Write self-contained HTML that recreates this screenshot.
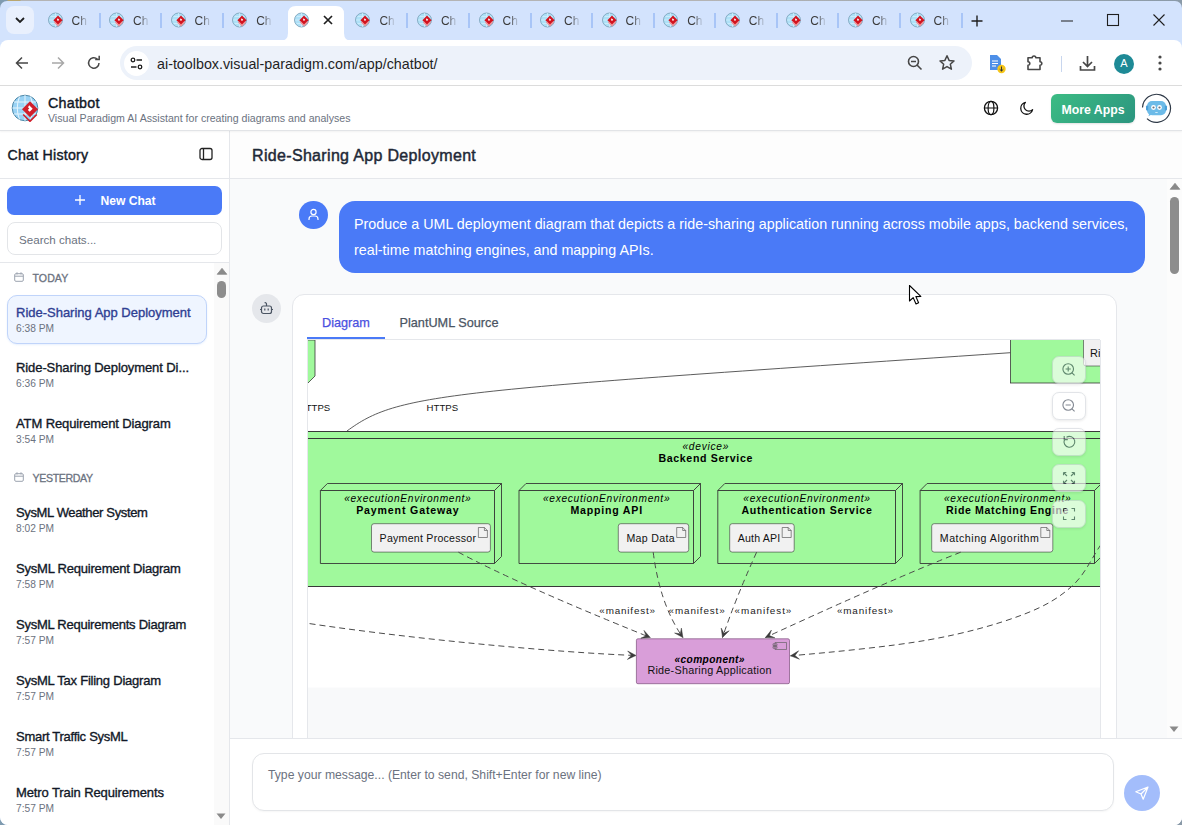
<!DOCTYPE html>
<html><head><meta charset="utf-8">
<style>
*{box-sizing:border-box;margin:0;padding:0}
html,body{width:1182px;height:825px;overflow:hidden;font-family:"Liberation Sans",sans-serif}
body{position:relative;background:linear-gradient(90deg,#7f9bb0 0,#7f9bb0 7px,#b9a66e 8px,#b9a66e 20px,#b4b4b4 21px,#b4b4b4 60%,#8a9aa8 100%)}
.a{position:absolute}
#win{position:absolute;left:0;top:0;width:1182px;height:825px;clip-path:inset(1px 0 0 0 round 7px 7px 8px 8px);overflow:hidden;background:#d3e3fd}
.tab{position:absolute;top:0;height:40px;width:62px}
.fav{position:absolute;top:11.5px;width:16px;height:16px}
.tt{position:absolute;top:12.5px;font-size:12px;color:#3b3b3b;line-height:16px;white-space:nowrap;overflow:hidden;width:17px;-webkit-mask-image:linear-gradient(90deg,#000 0,#000 40%,rgba(0,0,0,0.35) 75%,rgba(0,0,0,0) 100%);mask-image:linear-gradient(90deg,#000 0,#000 40%,rgba(0,0,0,0.35) 75%,rgba(0,0,0,0) 100%)}
.sep{position:absolute;top:12.5px;width:2px;height:15.5px;background:#a8c5f7}
.txt{position:absolute;white-space:nowrap;line-height:1}
.zb{position:absolute;left:0;width:34px;height:28px;border-radius:7px;background:#fff;border:1px solid #d1d5db;box-shadow:0 1px 3px rgba(0,0,0,0.15)}
.zb svg{position:absolute;left:-1px;top:-1px}
</style></head><body>
<div id="win">
  <!-- TAB STRIP -->
  <div class="a" style="left:6px;top:6px;width:28px;height:28px;border-radius:8px;background:#e9f0fd"></div>
  <svg class="a" style="left:13px;top:13px" width="14" height="14" viewBox="0 0 14 14"><path d="M3 5 L7 9 L11 5" fill="none" stroke="#1f1f1f" stroke-width="1.8"/></svg>
  <!-- active tab -->
  <div class="a" style="left:280px;top:6px;width:72px;height:35px">
    <svg width="72" height="35" viewBox="0 0 72 35" style="position:absolute;left:0;top:0"><path d="M0 35 Q8 35 8 27 L8 8 Q8 0 16 0 L56 0 Q64 0 64 8 L64 27 Q64 35 72 35 Z" fill="#fff"/></svg>
  </div>
  <div id="tabs"><div class="fav" style="left:47.5px"><svg viewBox="0 0 16 16" width="16" height="16"><circle cx="7.5" cy="8" r="7" fill="#aee0f7" stroke="#7fa6bd" stroke-width="0.9"></circle><path d="M1 8 H14 M7.5 1 V15 M2.5 4.5 H12.5 M2.5 11.5 H12.5" stroke="#d6f0fc" stroke-width="0.7"></path><path d="M10 3.6 L14.6 8.2 L10 12.8 L5.4 8.2 Z" fill="#d3131f"></path><path d="M6 10.5 L10 14.6 L14 10.5 L13 9.6 L10 12.6 L7 9.6 Z" fill="#ef8a8f"></path><path d="M9.6 6.2 L11.2 7.8 L10 9 L9 8 Z" fill="#fff"></path></svg></div><div class="tt" style="left:71.5px">Ch</div><div class="sep" style="left:98.5px"></div><div class="fav" style="left:109.1px"><svg viewBox="0 0 16 16" width="16" height="16"><circle cx="7.5" cy="8" r="7" fill="#aee0f7" stroke="#7fa6bd" stroke-width="0.9"></circle><path d="M1 8 H14 M7.5 1 V15 M2.5 4.5 H12.5 M2.5 11.5 H12.5" stroke="#d6f0fc" stroke-width="0.7"></path><path d="M10 3.6 L14.6 8.2 L10 12.8 L5.4 8.2 Z" fill="#d3131f"></path><path d="M6 10.5 L10 14.6 L14 10.5 L13 9.6 L10 12.6 L7 9.6 Z" fill="#ef8a8f"></path><path d="M9.6 6.2 L11.2 7.8 L10 9 L9 8 Z" fill="#fff"></path></svg></div><div class="tt" style="left:133.1px">Ch</div><div class="sep" style="left:160.1px"></div><div class="fav" style="left:170.6px"><svg viewBox="0 0 16 16" width="16" height="16"><circle cx="7.5" cy="8" r="7" fill="#aee0f7" stroke="#7fa6bd" stroke-width="0.9"></circle><path d="M1 8 H14 M7.5 1 V15 M2.5 4.5 H12.5 M2.5 11.5 H12.5" stroke="#d6f0fc" stroke-width="0.7"></path><path d="M10 3.6 L14.6 8.2 L10 12.8 L5.4 8.2 Z" fill="#d3131f"></path><path d="M6 10.5 L10 14.6 L14 10.5 L13 9.6 L10 12.6 L7 9.6 Z" fill="#ef8a8f"></path><path d="M9.6 6.2 L11.2 7.8 L10 9 L9 8 Z" fill="#fff"></path></svg></div><div class="tt" style="left:194.6px">Ch</div><div class="sep" style="left:221.6px"></div><div class="fav" style="left:232.2px"><svg viewBox="0 0 16 16" width="16" height="16"><circle cx="7.5" cy="8" r="7" fill="#aee0f7" stroke="#7fa6bd" stroke-width="0.9"></circle><path d="M1 8 H14 M7.5 1 V15 M2.5 4.5 H12.5 M2.5 11.5 H12.5" stroke="#d6f0fc" stroke-width="0.7"></path><path d="M10 3.6 L14.6 8.2 L10 12.8 L5.4 8.2 Z" fill="#d3131f"></path><path d="M6 10.5 L10 14.6 L14 10.5 L13 9.6 L10 12.6 L7 9.6 Z" fill="#ef8a8f"></path><path d="M9.6 6.2 L11.2 7.8 L10 9 L9 8 Z" fill="#fff"></path></svg></div><div class="tt" style="left:256.2px">Ch</div><div class="fav" style="left:293.8px"><svg viewBox="0 0 16 16" width="16" height="16"><circle cx="7.5" cy="8" r="7" fill="#aee0f7" stroke="#7fa6bd" stroke-width="0.9"></circle><path d="M1 8 H14 M7.5 1 V15 M2.5 4.5 H12.5 M2.5 11.5 H12.5" stroke="#d6f0fc" stroke-width="0.7"></path><path d="M10 3.6 L14.6 8.2 L10 12.8 L5.4 8.2 Z" fill="#d3131f"></path><path d="M6 10.5 L10 14.6 L14 10.5 L13 9.6 L10 12.6 L7 9.6 Z" fill="#ef8a8f"></path><path d="M9.6 6.2 L11.2 7.8 L10 9 L9 8 Z" fill="#fff"></path></svg></div><div class="fav" style="left:355.4px"><svg viewBox="0 0 16 16" width="16" height="16"><circle cx="7.5" cy="8" r="7" fill="#aee0f7" stroke="#7fa6bd" stroke-width="0.9"></circle><path d="M1 8 H14 M7.5 1 V15 M2.5 4.5 H12.5 M2.5 11.5 H12.5" stroke="#d6f0fc" stroke-width="0.7"></path><path d="M10 3.6 L14.6 8.2 L10 12.8 L5.4 8.2 Z" fill="#d3131f"></path><path d="M6 10.5 L10 14.6 L14 10.5 L13 9.6 L10 12.6 L7 9.6 Z" fill="#ef8a8f"></path><path d="M9.6 6.2 L11.2 7.8 L10 9 L9 8 Z" fill="#fff"></path></svg></div><div class="tt" style="left:379.4px">Ch</div><div class="sep" style="left:406.4px"></div><div class="fav" style="left:416.9px"><svg viewBox="0 0 16 16" width="16" height="16"><circle cx="7.5" cy="8" r="7" fill="#aee0f7" stroke="#7fa6bd" stroke-width="0.9"></circle><path d="M1 8 H14 M7.5 1 V15 M2.5 4.5 H12.5 M2.5 11.5 H12.5" stroke="#d6f0fc" stroke-width="0.7"></path><path d="M10 3.6 L14.6 8.2 L10 12.8 L5.4 8.2 Z" fill="#d3131f"></path><path d="M6 10.5 L10 14.6 L14 10.5 L13 9.6 L10 12.6 L7 9.6 Z" fill="#ef8a8f"></path><path d="M9.6 6.2 L11.2 7.8 L10 9 L9 8 Z" fill="#fff"></path></svg></div><div class="tt" style="left:440.9px">Ch</div><div class="sep" style="left:467.9px"></div><div class="fav" style="left:478.5px"><svg viewBox="0 0 16 16" width="16" height="16"><circle cx="7.5" cy="8" r="7" fill="#aee0f7" stroke="#7fa6bd" stroke-width="0.9"></circle><path d="M1 8 H14 M7.5 1 V15 M2.5 4.5 H12.5 M2.5 11.5 H12.5" stroke="#d6f0fc" stroke-width="0.7"></path><path d="M10 3.6 L14.6 8.2 L10 12.8 L5.4 8.2 Z" fill="#d3131f"></path><path d="M6 10.5 L10 14.6 L14 10.5 L13 9.6 L10 12.6 L7 9.6 Z" fill="#ef8a8f"></path><path d="M9.6 6.2 L11.2 7.8 L10 9 L9 8 Z" fill="#fff"></path></svg></div><div class="tt" style="left:502.5px">Ch</div><div class="sep" style="left:529.5px"></div><div class="fav" style="left:540.1px"><svg viewBox="0 0 16 16" width="16" height="16"><circle cx="7.5" cy="8" r="7" fill="#aee0f7" stroke="#7fa6bd" stroke-width="0.9"></circle><path d="M1 8 H14 M7.5 1 V15 M2.5 4.5 H12.5 M2.5 11.5 H12.5" stroke="#d6f0fc" stroke-width="0.7"></path><path d="M10 3.6 L14.6 8.2 L10 12.8 L5.4 8.2 Z" fill="#d3131f"></path><path d="M6 10.5 L10 14.6 L14 10.5 L13 9.6 L10 12.6 L7 9.6 Z" fill="#ef8a8f"></path><path d="M9.6 6.2 L11.2 7.8 L10 9 L9 8 Z" fill="#fff"></path></svg></div><div class="tt" style="left:564.1px">Ch</div><div class="sep" style="left:591.1px"></div><div class="fav" style="left:601.6px"><svg viewBox="0 0 16 16" width="16" height="16"><circle cx="7.5" cy="8" r="7" fill="#aee0f7" stroke="#7fa6bd" stroke-width="0.9"></circle><path d="M1 8 H14 M7.5 1 V15 M2.5 4.5 H12.5 M2.5 11.5 H12.5" stroke="#d6f0fc" stroke-width="0.7"></path><path d="M10 3.6 L14.6 8.2 L10 12.8 L5.4 8.2 Z" fill="#d3131f"></path><path d="M6 10.5 L10 14.6 L14 10.5 L13 9.6 L10 12.6 L7 9.6 Z" fill="#ef8a8f"></path><path d="M9.6 6.2 L11.2 7.8 L10 9 L9 8 Z" fill="#fff"></path></svg></div><div class="tt" style="left:625.6px">Ch</div><div class="sep" style="left:652.6px"></div><div class="fav" style="left:663.2px"><svg viewBox="0 0 16 16" width="16" height="16"><circle cx="7.5" cy="8" r="7" fill="#aee0f7" stroke="#7fa6bd" stroke-width="0.9"></circle><path d="M1 8 H14 M7.5 1 V15 M2.5 4.5 H12.5 M2.5 11.5 H12.5" stroke="#d6f0fc" stroke-width="0.7"></path><path d="M10 3.6 L14.6 8.2 L10 12.8 L5.4 8.2 Z" fill="#d3131f"></path><path d="M6 10.5 L10 14.6 L14 10.5 L13 9.6 L10 12.6 L7 9.6 Z" fill="#ef8a8f"></path><path d="M9.6 6.2 L11.2 7.8 L10 9 L9 8 Z" fill="#fff"></path></svg></div><div class="tt" style="left:687.2px">Ch</div><div class="sep" style="left:714.2px"></div><div class="fav" style="left:724.8px"><svg viewBox="0 0 16 16" width="16" height="16"><circle cx="7.5" cy="8" r="7" fill="#aee0f7" stroke="#7fa6bd" stroke-width="0.9"></circle><path d="M1 8 H14 M7.5 1 V15 M2.5 4.5 H12.5 M2.5 11.5 H12.5" stroke="#d6f0fc" stroke-width="0.7"></path><path d="M10 3.6 L14.6 8.2 L10 12.8 L5.4 8.2 Z" fill="#d3131f"></path><path d="M6 10.5 L10 14.6 L14 10.5 L13 9.6 L10 12.6 L7 9.6 Z" fill="#ef8a8f"></path><path d="M9.6 6.2 L11.2 7.8 L10 9 L9 8 Z" fill="#fff"></path></svg></div><div class="tt" style="left:748.8px">Ch</div><div class="sep" style="left:775.8px"></div><div class="fav" style="left:786.3px"><svg viewBox="0 0 16 16" width="16" height="16"><circle cx="7.5" cy="8" r="7" fill="#aee0f7" stroke="#7fa6bd" stroke-width="0.9"></circle><path d="M1 8 H14 M7.5 1 V15 M2.5 4.5 H12.5 M2.5 11.5 H12.5" stroke="#d6f0fc" stroke-width="0.7"></path><path d="M10 3.6 L14.6 8.2 L10 12.8 L5.4 8.2 Z" fill="#d3131f"></path><path d="M6 10.5 L10 14.6 L14 10.5 L13 9.6 L10 12.6 L7 9.6 Z" fill="#ef8a8f"></path><path d="M9.6 6.2 L11.2 7.8 L10 9 L9 8 Z" fill="#fff"></path></svg></div><div class="tt" style="left:810.3px">Ch</div><div class="sep" style="left:837.3px"></div><div class="fav" style="left:847.9px"><svg viewBox="0 0 16 16" width="16" height="16"><circle cx="7.5" cy="8" r="7" fill="#aee0f7" stroke="#7fa6bd" stroke-width="0.9"></circle><path d="M1 8 H14 M7.5 1 V15 M2.5 4.5 H12.5 M2.5 11.5 H12.5" stroke="#d6f0fc" stroke-width="0.7"></path><path d="M10 3.6 L14.6 8.2 L10 12.8 L5.4 8.2 Z" fill="#d3131f"></path><path d="M6 10.5 L10 14.6 L14 10.5 L13 9.6 L10 12.6 L7 9.6 Z" fill="#ef8a8f"></path><path d="M9.6 6.2 L11.2 7.8 L10 9 L9 8 Z" fill="#fff"></path></svg></div><div class="tt" style="left:871.9px">Ch</div><div class="sep" style="left:898.9px"></div><div class="fav" style="left:909.5px"><svg viewBox="0 0 16 16" width="16" height="16"><circle cx="7.5" cy="8" r="7" fill="#aee0f7" stroke="#7fa6bd" stroke-width="0.9"></circle><path d="M1 8 H14 M7.5 1 V15 M2.5 4.5 H12.5 M2.5 11.5 H12.5" stroke="#d6f0fc" stroke-width="0.7"></path><path d="M10 3.6 L14.6 8.2 L10 12.8 L5.4 8.2 Z" fill="#d3131f"></path><path d="M6 10.5 L10 14.6 L14 10.5 L13 9.6 L10 12.6 L7 9.6 Z" fill="#ef8a8f"></path><path d="M9.6 6.2 L11.2 7.8 L10 9 L9 8 Z" fill="#fff"></path></svg></div><div class="tt" style="left:933.5px">Ch</div><div class="sep" style="left:960.5px"></div></div>
  <svg class="a" style="left:322px;top:14px" width="12" height="12" viewBox="0 0 12 12"><path d="M2 2 L10 10 M10 2 L2 10" stroke="#1f1f1f" stroke-width="1.7"/></svg>
  <svg class="a" style="left:969px;top:12.5px" width="16" height="16" viewBox="0 0 16 16"><path d="M8 2.5 V13.5 M2.5 8 H13.5" stroke="#1f1f1f" stroke-width="1.4"/></svg>
  <svg class="a" style="left:1060px;top:14px" width="14" height="14" viewBox="0 0 14 14"><path d="M1 7 H13" stroke="#1f1f1f" stroke-width="1.1"/></svg>
  <svg class="a" style="left:1106px;top:13px" width="14" height="14" viewBox="0 0 14 14"><rect x="1.5" y="1.5" width="11" height="11" fill="none" stroke="#1f1f1f" stroke-width="1.1"/></svg>
  <svg class="a" style="left:1152px;top:13px" width="14" height="14" viewBox="0 0 14 14"><path d="M1.5 1.5 L12.5 12.5 M12.5 1.5 L1.5 12.5" stroke="#1f1f1f" stroke-width="1.1"/></svg>

  <!-- TOOLBAR -->
  <div class="a" style="left:0;top:40px;width:1182px;height:46px;background:#fff;border-radius:8px 8px 0 0"></div>
  <div class="a" style="left:0;top:85px;width:1182px;height:1px;background:#dcdcdc"></div>
  <svg class="a" style="left:14px;top:55px" width="16" height="16" viewBox="0 0 16 16"><path d="M14 8 H2.5 M8 2.5 L2.5 8 L8 13.5" fill="none" stroke="#474747" stroke-width="1.5"/></svg>
  <svg class="a" style="left:50px;top:55px" width="16" height="16" viewBox="0 0 16 16"><path d="M2 8 H13.5 M8 2.5 L13.5 8 L8 13.5" fill="none" stroke="#a8a8a8" stroke-width="1.5"/></svg>
  <svg class="a" style="left:86px;top:55px" width="16" height="16" viewBox="0 0 16 16"><path d="M13 8 A5.2 5.2 0 1 1 11.4 4.2" fill="none" stroke="#474747" stroke-width="1.5"/><path d="M9.2 4.6 L13.2 4.6 L13.2 0.8" fill="none" stroke="#474747" stroke-width="1.5"/></svg>
  <div class="a" style="left:120px;top:46px;width:852px;height:34px;border-radius:17px;background:#edf2fa"></div>
  <div class="a" style="left:124px;top:51px;width:25px;height:25px;border-radius:50%;background:#fff"></div>
  <svg class="a" style="left:129px;top:56px" width="15" height="15" viewBox="0 0 15 15"><circle cx="4" cy="4" r="1.8" fill="none" stroke="#1f1f1f" stroke-width="1.3"/><path d="M7.5 4 H13" stroke="#1f1f1f" stroke-width="1.3"/><circle cx="11" cy="11" r="1.8" fill="none" stroke="#1f1f1f" stroke-width="1.3"/><path d="M2 11 H7.5" stroke="#1f1f1f" stroke-width="1.3"/></svg>
  <div class="txt" style="left:157px;top:56.5px;font-size:14.3px;color:#1f1f1f">ai-toolbox.visual-paradigm.com/app/chatbot/</div>
  <svg class="a" style="left:906px;top:54px" width="18" height="18" viewBox="0 0 18 18"><circle cx="7.5" cy="7.5" r="5" fill="none" stroke="#474747" stroke-width="1.6"/><path d="M11 11 L15.5 15.5 M5 7.5 H10" stroke="#474747" stroke-width="1.6"/></svg>
  <svg class="a" style="left:938px;top:54px" width="18" height="18" viewBox="0 0 18 18"><path d="M9 1.8 L11.1 6.4 L16 6.9 L12.3 10.2 L13.4 15.2 L9 12.6 L4.6 15.2 L5.7 10.2 L2 6.9 L6.9 6.4 Z" fill="none" stroke="#474747" stroke-width="1.5" stroke-linejoin="round"/></svg>
  <svg class="a" style="left:987px;top:54px" width="20" height="20" viewBox="0 0 20 20"><path d="M3 1 H10 L14 5 V16 H3 Z" fill="#4d8fe8"/><path d="M5 7 H11 M5 9.5 H11 M5 12 H9" stroke="#fff" stroke-width="1"/><circle cx="14.5" cy="15" r="4.2" fill="#f5c518"/><path d="M14.5 12.5 V17 M12.7 15.3 L14.5 17 L16.3 15.3" fill="none" stroke="#333" stroke-width="1"/></svg>
  <svg class="a" style="left:1025px;top:54px" width="18" height="18" viewBox="0 0 18 18"><path d="M3 3.8 H7.2 A1.8 1.8 0 0 1 10.8 3.8 H15 V7.7 A1.8 1.8 0 0 1 15 11.3 V15.5 H3 V11.3 A1.8 1.8 0 0 0 3 7.7 Z" fill="none" stroke="#474747" stroke-width="1.6" stroke-linejoin="round"/></svg>
  <div class="a" style="left:1061px;top:56px;width:1px;height:16px;background:#c8d6ee"></div>
  <svg class="a" style="left:1078px;top:54px" width="19" height="19" viewBox="0 0 19 19"><path d="M9.5 2 V12 M5 8 L9.5 12.5 L14 8 M2.5 12 V16 H16.5 V12" fill="none" stroke="#474747" stroke-width="1.7"/></svg>
  <div class="a" style="left:1114px;top:54px;width:20px;height:20px;border-radius:50%;background:#1e8a96"></div>
  <div class="txt" style="left:1114px;top:58px;width:20px;text-align:center;font-size:11px;color:#fff">A</div>
  <svg class="a" style="left:1152px;top:53px" width="16" height="20" viewBox="0 0 16 20"><circle cx="8" cy="4" r="1.6" fill="#474747"/><circle cx="8" cy="10" r="1.6" fill="#474747"/><circle cx="8" cy="16" r="1.6" fill="#474747"/></svg>

  <!-- APP -->
  <!-- APP HEADER -->
  <div class="a" style="left:0;top:86px;width:1182px;height:739px;background:#fff"></div>
  
  <svg class="a" style="left:11px;top:94px" width="28" height="28" viewBox="0 0 28 28">
    <circle cx="14" cy="14" r="12.8" fill="#9ad3f5" stroke="#4e87a6" stroke-width="1"/>
    <path d="M1.5 14 H26.5 M14 1.2 V26.8 M3 8 H25 M3 20 H25 M8.5 2.5 Q4 14 8.5 25.5 M19.5 2.5 Q24 14 19.5 25.5" fill="none" stroke="#e6f5fd" stroke-width="1"/>
    <path d="M19 7.3 L27 15.3 L19 23.3 L11 15.3 Z" fill="#d11f2b"/>
    <path d="M18.2 11.3 L21.7 14.8 L18.7 17.8 L16.8 15.9 L18.3 14.6 L17 13.2 Z" fill="#fff"/>
    <path d="M12.2 20.5 L19 27.3 L25.8 20.5" fill="none" stroke="#d11f2b" stroke-width="1.6"/>
  </svg>
  <div class="txt" style="left:48px;top:96px;font-size:14.3px;-webkit-text-stroke:0.4px currentColor;color:#111827;letter-spacing:0.23px">Chatbot</div>
  <div class="txt" style="left:48px;top:113px;font-size:10.6px;color:#6b7280">Visual Paradigm AI Assistant for creating diagrams and analyses</div>
  <svg class="a" style="left:983px;top:100px" width="16" height="16" viewBox="0 0 16 16"><circle cx="8" cy="8" r="6.6" fill="none" stroke="#111" stroke-width="1.3"/><ellipse cx="8" cy="8" rx="2.9" ry="6.6" fill="none" stroke="#111" stroke-width="1.2"/><path d="M1.4 8 H14.6" stroke="#111" stroke-width="1.2"/></svg>
  <svg class="a" style="left:1019px;top:100px" width="16" height="16" viewBox="0 0 16 16"><path d="M13.6 9.6 A6 6 0 1 1 6.4 2.4 A4.6 4.6 0 0 0 13.6 9.6 Z" fill="none" stroke="#111" stroke-width="1.3" stroke-linejoin="round"/></svg>
  <div class="a" style="left:1051px;top:94px;width:84px;height:29px;border-radius:6px;background:linear-gradient(135deg,#3cbc84,#2b957f);box-shadow:0 1px 2px rgba(0,0,0,0.12)"></div>
  <div class="txt" style="left:1051px;top:104px;width:84px;text-align:center;font-size:12.3px;font-weight:bold;color:#fff">More Apps</div>
  <svg class="a" style="left:1141px;top:93px" width="31" height="31" viewBox="0 0 31 31">
    <path d="M1.5 14.5 A14 14 0 1 1 6 25.6" fill="none" stroke="#2f3a48" stroke-width="1.2"/>
    <rect x="6" y="8.1" width="19" height="14.2" rx="5" fill="#6dbbe8"/>
    <path d="M8.5 19 L7.5 23.2 L12.5 20.5 Z" fill="#6dbbe8"/>
    <rect x="5" y="12.5" width="2.2" height="5" rx="1" fill="#4a9fd8"/><rect x="23.8" y="12.5" width="2.2" height="5" rx="1" fill="#4a9fd8"/>
    <circle cx="12.5" cy="14.5" r="2.4" fill="#fff"/><circle cx="18.5" cy="14.5" r="2.4" fill="#fff"/>
    <circle cx="12.5" cy="14.5" r="1.1" fill="#6b7580"/><circle cx="18.5" cy="14.5" r="1.1" fill="#6b7580"/>
    <path d="M14.3 19.5 H16.7" stroke="#d9effb" stroke-width="0.9"/>
  </svg>

  <!-- SIDEBAR -->
  <div class="a" style="left:229px;top:131px;width:1px;height:694px;background:#e5e7eb"></div>
  <div class="txt" style="left:7.5px;top:147.5px;font-size:14.2px;-webkit-text-stroke:0.4px currentColor;color:#111827;letter-spacing:0.23px">Chat History</div>
  <svg class="a" style="left:199px;top:147px" width="14" height="14" viewBox="0 0 14 14"><rect x="1" y="1.5" width="12" height="11" rx="2" fill="none" stroke="#222" stroke-width="1.3"/><path d="M4.5 1.5 V12.5" stroke="#222" stroke-width="1.3"/></svg>
  <div class="a" style="left:0;top:178px;width:229px;height:1px;background:#e5e7eb"></div>
  <div class="a" style="left:7px;top:186px;width:215px;height:29px;border-radius:7px;background:#4a7af7"></div>
  <svg class="a" style="left:74px;top:194px" width="12" height="12" viewBox="0 0 12 12"><path d="M6 1 V11 M1 6 H11" stroke="#fff" stroke-width="1.3"/></svg>
  <div class="txt" style="left:100.5px;top:194.5px;font-size:12.1px;font-weight:bold;color:#fff">New Chat</div>
  <div class="a" style="left:7px;top:222px;width:215px;height:33px;border-radius:8px;background:#fff;border:1px solid #e3e5e8"></div>
  <div class="txt" style="left:19px;top:234px;font-size:11.6px;color:#6b7280">Search chats...</div>
  <div class="a" style="left:0;top:262px;width:229px;height:1px;background:#e5e7eb"></div>
  <!-- sidebar scrollbar -->
  <div class="a" style="left:214px;top:263px;width:15px;height:562px;background:#fafafa"></div>
  <svg class="a" style="left:215.5px;top:266px" width="12" height="10" viewBox="0 0 12 10"><path d="M1.2 8.3 L6 2.3 L10.8 8.3 Z" fill="#8a8a8a" stroke="#8a8a8a" stroke-width="0.8" stroke-linejoin="round"/></svg>
  <div class="a" style="left:217px;top:281px;width:9px;height:17px;border-radius:4.5px;background:#8d8d8d"></div>
  <svg class="a" style="left:215px;top:812px" width="12" height="10" viewBox="0 0 12 10"><path d="M1.5 1.5 L6 7 L10.5 1.5 Z" fill="#8a8a8a"/></svg>
  <svg class="a" style="left:14px;top:272px" width="10" height="10" viewBox="0 0 10 10"><rect x="0.7" y="1.7" width="8.6" height="7.6" rx="1.2" fill="none" stroke="#9ca3af" stroke-width="1"/><path d="M0.7 4.2 H9.3 M3 0.3 V2.5 M7 0.3 V2.5" stroke="#9ca3af" stroke-width="1"/></svg>
  <div class="txt" style="left:32.5px;top:272.5px;font-size:10.6px;-webkit-text-stroke:0.3px currentColor;color:#6b7280;letter-spacing:0.06px">TODAY</div>
  <div class="a" style="left:7px;top:295px;width:200px;height:49px;border-radius:10px;background:#eff5ff;border:1px solid #c0d4fa;box-shadow:0 1px 2px rgba(59,130,246,0.12)"></div>
  <div id="hist"><div class="txt" style="left:16px;top:305.8px;font-size:13px;letter-spacing:-0.011px;-webkit-text-stroke:0.35px currentColor;color:#2f3f93">Ride-Sharing App Deployment</div><div class="txt" style="left:16px;top:323.6px;font-size:10.2px;color:#6b7280">6:38 PM</div><div class="txt" style="left:16px;top:361.4px;font-size:13px;letter-spacing:-0.09px;-webkit-text-stroke:0.35px currentColor;color:#111827">Ride-Sharing Deployment Di...</div><div class="txt" style="left:16px;top:379.2px;font-size:10.2px;color:#6b7280">6:36 PM</div><div class="txt" style="left:16px;top:417.2px;font-size:13px;letter-spacing:-0.113px;-webkit-text-stroke:0.35px currentColor;color:#111827">ATM Requirement Diagram</div><div class="txt" style="left:16px;top:435px;font-size:10.2px;color:#6b7280">3:54 PM</div><div class="txt" style="left:16px;top:506.2px;font-size:13px;letter-spacing:-0.36px;-webkit-text-stroke:0.35px currentColor;color:#111827">SysML Weather System</div><div class="txt" style="left:16px;top:524px;font-size:10.2px;color:#6b7280">8:02 PM</div><div class="txt" style="left:16px;top:561.7px;font-size:13px;letter-spacing:-0.212px;-webkit-text-stroke:0.35px currentColor;color:#111827">SysML Requirement Diagram</div><div class="txt" style="left:16px;top:579.5px;font-size:10.2px;color:#6b7280">7:58 PM</div><div class="txt" style="left:16px;top:617.7px;font-size:13px;letter-spacing:-0.25px;-webkit-text-stroke:0.35px currentColor;color:#111827">SysML Requirements Diagram</div><div class="txt" style="left:16px;top:635.5px;font-size:10.2px;color:#6b7280">7:57 PM</div><div class="txt" style="left:16px;top:673.7px;font-size:13px;letter-spacing:-0.229px;-webkit-text-stroke:0.35px currentColor;color:#111827">SysML Tax Filing Diagram</div><div class="txt" style="left:16px;top:691.5px;font-size:10.2px;color:#6b7280">7:57 PM</div><div class="txt" style="left:16px;top:729.7px;font-size:13px;letter-spacing:-0.279px;-webkit-text-stroke:0.35px currentColor;color:#111827">Smart Traffic SysML</div><div class="txt" style="left:16px;top:747.5px;font-size:10.2px;color:#6b7280">7:57 PM</div><div class="txt" style="left:16px;top:785.7px;font-size:13px;letter-spacing:-0.1px;-webkit-text-stroke:0.35px currentColor;color:#111827">Metro Train Requirements</div><div class="txt" style="left:16px;top:803.5px;font-size:10.2px;color:#6b7280">7:57 PM</div><svg class="a" style="left:14px;top:472px" width="10" height="10" viewBox="0 0 10 10"><rect x="0.7" y="1.7" width="8.6" height="7.6" rx="1.2" fill="none" stroke="#9ca3af" stroke-width="1"></rect><path d="M0.7 4.2 H9.3 M3 0.3 V2.5 M7 0.3 V2.5" stroke="#9ca3af" stroke-width="1"></path></svg><div class="txt" style="left:32.5px;top:472.5px;font-size:10.6px;-webkit-text-stroke:0.3px currentColor;color:#6b7280;letter-spacing:-0.35px">YESTERDAY</div></div>

  <!-- MAIN HEADER -->
  <div class="a" style="left:230px;top:131px;width:952px;height:47px;background:#fdfdfd"></div>
  <div class="a" style="left:0;top:129.5px;width:1182px;height:1.5px;background:#e2e4e7;box-shadow:0 1px 2px rgba(0,0,0,0.07)"></div>
  <div class="txt" style="left:252px;top:147.8px;font-size:16px;-webkit-text-stroke:0.45px currentColor;color:#1f2937;letter-spacing:0.33px">Ride-Sharing App Deployment</div>
  <div class="a" style="left:230px;top:178px;width:952px;height:1px;background:#e5e7eb"></div>
  <div class="a" style="left:230px;top:179px;width:952px;height:559px;background:#f9fafb"></div>
  <!-- chat scrollbar -->
  <div class="a" style="left:1167px;top:179px;width:15px;height:559px;background:#fcfcfc"></div>
  <svg class="a" style="left:1168.5px;top:181px" width="12" height="10" viewBox="0 0 12 10"><path d="M1.2 8.3 L6 2.3 L10.8 8.3 Z" fill="#8a8a8a" stroke="#8a8a8a" stroke-width="0.8" stroke-linejoin="round"/></svg>
  <div class="a" style="left:1170px;top:197px;width:9px;height:77px;border-radius:4.5px;background:#8d8d8d"></div>
  <svg class="a" style="left:1168px;top:725px" width="12" height="10" viewBox="0 0 12 10"><path d="M1.5 1.5 L6 7 L10.5 1.5 Z" fill="#8a8a8a"/></svg>
  <!-- user msg -->
  <div class="a" style="left:299.2px;top:201px;width:28.5px;height:28px;border-radius:50%;background:#4a7af7"></div>
  <svg class="a" style="left:306px;top:207px" width="15" height="15" viewBox="0 0 15 15"><circle cx="7.5" cy="5" r="2.6" fill="none" stroke="#fff" stroke-width="1.2"/><path d="M3 13 V12 A3 3 0 0 1 6 9 H9 A3 3 0 0 1 12 12 V13" fill="none" stroke="#fff" stroke-width="1.2"/></svg>
  <div class="a" style="left:339px;top:201px;width:806px;height:71.8px;border-radius:16px;background:#4a7af7"></div>
  <div class="txt" style="left:354px;top:217.5px;font-size:14.3px;color:#fff;line-height:26px;top:211px">Produce a UML deployment diagram that depicts a ride-sharing application running across mobile apps, backend services,<br>real-time matching engines, and mapping APIs.</div>
  <!-- bot avatar -->
  <div class="a" style="left:252px;top:294px;width:29px;height:29px;border-radius:50%;background:#e5e7eb"></div>
  <svg class="a" style="left:259px;top:301px" width="15" height="15" viewBox="0 0 15 15"><rect x="2.5" y="5" width="10" height="7.5" rx="2" fill="none" stroke="#4b5563" stroke-width="1.2"/><path d="M7.5 5 V3 A1.3 1.3 0 0 0 6.2 1.7 H5.6 M1 8.5 H2.5 M12.5 8.5 H14 M5.8 7.6 V9.4 M9.2 7.6 V9.4" fill="none" stroke="#4b5563" stroke-width="1.2"/></svg>
  <!-- card -->
  <div class="a" style="left:292px;top:294px;width:825px;height:600px;border-radius:12px;background:#fff;border:1px solid #e5e7eb"></div>
  <div class="txt" style="left:322px;top:317px;font-size:12.7px;color:#4a50e0;-webkit-text-stroke:0.25px currentColor">Diagram</div>
  <div class="txt" style="left:399.5px;top:317px;font-size:12.7px;color:#4b5563;-webkit-text-stroke:0.25px currentColor">PlantUML Source</div>
  <div class="a" style="left:307px;top:339px;width:793px;height:1px;background:#e5e7eb"></div>
  <div class="a" style="left:307px;top:337px;width:78px;height:2px;background:#4a7af7"></div>
  <!-- diagram viewport -->
  <div class="a" style="left:307px;top:340px;width:794px;height:400px;background:#f8f9fa;border-left:1px solid #e5e7eb;border-right:1px solid #e5e7eb;overflow:hidden">
    <svg id="diag" width="794" height="400" viewBox="307 340 794 400" style="position:absolute;left:-1px;top:0">
<rect x="307" y="340" width="794" height="347.5" fill="#fff"/>
<path d="M290 340 H315 V376 L307 384 H290 Z" fill="#a0f99c" stroke="#383838" stroke-width="0.8"/>
<rect x="1010.5" y="320" width="120" height="63" fill="#a0f99c" stroke="#383838" stroke-width="0.8"/>
<rect x="1083.5" y="320" width="40" height="46" rx="2.5" fill="#f1f1f1" stroke="#383838" stroke-width="0.6"/>
<text x="1090" y="357" font-size="11" fill="#111">Ri</text>
<path d="M347 431 C 398.7 392.9, 441.4 391.4, 1010.5 352.7" fill="none" stroke="#4a4a4a" stroke-width="0.9"/>
<text x="426.6" y="410.8" font-size="9.6" fill="#111">HTTPS</text>
<text x="330.2" y="410.8" font-size="9.6" fill="#111" text-anchor="end">HTTPS</text>
<rect x="290" y="431.5" width="830" height="155" fill="#a0f99c" stroke="#383838" stroke-width="1"/>
<line x1="290" y1="438.5" x2="1120" y2="438.5" stroke="#383838" stroke-width="1"/>
<text x="705.4" y="450.2" font-size="10.2" font-weight="normal" font-style="italic" text-anchor="middle" fill="#000" textLength="46" lengthAdjust="spacing">«device»</text>
<text x="705.4" y="462.4" font-size="10.6" font-weight="bold" font-style="normal" text-anchor="middle" fill="#000" textLength="94" lengthAdjust="spacing">Backend Service</text>
<path d="M320.4 490.5 L327.4 483.5 H501.5 L494.5 490.5 Z" fill="#a0f99c" stroke="#383838" stroke-width="0.9"/>
<path d="M494.5 490.5 L501.5 483.5 V556.5 L494.5 563.5 Z" fill="#a0f99c" stroke="#383838" stroke-width="0.9"/>
<path d="M320.4 490.5 H494.5 V563.5 H320.4 Z" fill="#a0f99c" stroke="#383838" stroke-width="0.9"/>
<text x="407.45" y="501.9" font-size="10.2" font-weight="normal" font-style="italic" text-anchor="middle" fill="#000" textLength="126.6" lengthAdjust="spacing">«executionEnvironment»</text>
<text x="407.45" y="513.8" font-size="10.6" font-weight="bold" font-style="normal" text-anchor="middle" fill="#000" textLength="102.6" lengthAdjust="spacing">Payment Gateway</text>
<path d="M519 490.5 L526 483.5 H700.5 L693.5 490.5 Z" fill="#a0f99c" stroke="#383838" stroke-width="0.9"/>
<path d="M693.5 490.5 L700.5 483.5 V556.5 L693.5 563.5 Z" fill="#a0f99c" stroke="#383838" stroke-width="0.9"/>
<path d="M519 490.5 H693.5 V563.5 H519 Z" fill="#a0f99c" stroke="#383838" stroke-width="0.9"/>
<text x="606.25" y="501.9" font-size="10.2" font-weight="normal" font-style="italic" text-anchor="middle" fill="#000" textLength="126.6" lengthAdjust="spacing">«executionEnvironment»</text>
<text x="606.25" y="513.8" font-size="10.6" font-weight="bold" font-style="normal" text-anchor="middle" fill="#000" textLength="71.7" lengthAdjust="spacing">Mapping API</text>
<path d="M717.8 490.5 L724.8 483.5 H902.5 L895.5 490.5 Z" fill="#a0f99c" stroke="#383838" stroke-width="0.9"/>
<path d="M895.5 490.5 L902.5 483.5 V556.5 L895.5 563.5 Z" fill="#a0f99c" stroke="#383838" stroke-width="0.9"/>
<path d="M717.8 490.5 H895.5 V563.5 H717.8 Z" fill="#a0f99c" stroke="#383838" stroke-width="0.9"/>
<text x="806.65" y="501.9" font-size="10.2" font-weight="normal" font-style="italic" text-anchor="middle" fill="#000" textLength="126.6" lengthAdjust="spacing">«executionEnvironment»</text>
<text x="806.65" y="513.8" font-size="10.6" font-weight="bold" font-style="normal" text-anchor="middle" fill="#000" textLength="130.5" lengthAdjust="spacing">Authentication Service</text>
<path d="M920.1 490.5 L927.1 483.5 H1101.5 L1094.5 490.5 Z" fill="#a0f99c" stroke="#383838" stroke-width="0.9"/>
<path d="M1094.5 490.5 L1101.5 483.5 V556.5 L1094.5 563.5 Z" fill="#a0f99c" stroke="#383838" stroke-width="0.9"/>
<path d="M920.1 490.5 H1094.5 V563.5 H920.1 Z" fill="#a0f99c" stroke="#383838" stroke-width="0.9"/>
<text x="1007.3" y="501.9" font-size="10.2" font-weight="normal" font-style="italic" text-anchor="middle" fill="#000" textLength="126.6" lengthAdjust="spacing">«executionEnvironment»</text>
<text x="1007.3" y="513.8" font-size="10.6" font-weight="bold" font-style="normal" text-anchor="middle" fill="#000" textLength="122.4" lengthAdjust="spacing">Ride Matching Engine</text>
<rect x="371.5" y="523.7" width="118.9" height="28.4" rx="2.5" fill="#f1f1f1" stroke="#383838" stroke-width="0.6"/>
<text x="379.6" y="541.8" font-size="10.6" font-weight="normal" font-style="normal" text-anchor="start" fill="#111" textLength="96.4" lengthAdjust="spacing">Payment Processor</text>
<path d="M478.4 527.5 H484.4 L487.4 530.5 V537.5 H478.4 Z M484.4 527.5 V530.5 H487.4" fill="#f1f1f1" stroke="#444" stroke-width="0.6"/>
<rect x="618.3" y="523.7" width="70.4" height="28.4" rx="2.5" fill="#f1f1f1" stroke="#383838" stroke-width="0.6"/>
<text x="626.4" y="541.8" font-size="10.6" font-weight="normal" font-style="normal" text-anchor="start" fill="#111" textLength="48.2" lengthAdjust="spacing">Map Data</text>
<path d="M676.7 527.5 H682.7 L685.7 530.5 V537.5 H676.7 Z M682.7 527.5 V530.5 H685.7" fill="#f1f1f1" stroke="#444" stroke-width="0.6"/>
<rect x="729.7" y="523.7" width="64.5" height="28.4" rx="2.5" fill="#f1f1f1" stroke="#383838" stroke-width="0.6"/>
<text x="737.8000000000001" y="541.8" font-size="10.6" font-weight="normal" font-style="normal" text-anchor="start" fill="#111" textLength="42.5" lengthAdjust="spacing">Auth API</text>
<path d="M782.2 527.5 H788.2 L791.2 530.5 V537.5 H782.2 Z M788.2 527.5 V530.5 H791.2" fill="#f1f1f1" stroke="#444" stroke-width="0.6"/>
<rect x="931.7" y="523.7" width="121.1" height="28.4" rx="2.5" fill="#f1f1f1" stroke="#383838" stroke-width="0.6"/>
<text x="939.8000000000001" y="541.8" font-size="10.6" font-weight="normal" font-style="normal" text-anchor="start" fill="#111" textLength="99" lengthAdjust="spacing">Matching Algorithm</text>
<path d="M1040.8 527.5 H1046.8 L1049.8 530.5 V537.5 H1040.8 Z M1046.8 527.5 V530.5 H1049.8" fill="#f1f1f1" stroke="#444" stroke-width="0.6"/>
<rect x="636.4" y="638.8" width="153.1" height="44.9" rx="1.5" fill="#d99ed9" stroke="#7d4f7d" stroke-width="0.7"/>
<path d="M775 642.5 H786.5 V649.5 H775 Z M773 643.8 H777 V645.5 H773 Z M773 646.5 H777 V648.2 H773 Z" fill="#d99ed9" stroke="#555" stroke-width="0.6"/>
<text x="709.5" y="662.8" font-size="10.2" font-weight="bold" font-style="italic" text-anchor="middle" fill="#000" textLength="70" lengthAdjust="spacing">«component»</text>
<text x="709.4" y="673.9" font-size="10.8" font-weight="normal" font-style="normal" text-anchor="middle" fill="#111" textLength="124" lengthAdjust="spacing">Ride-Sharing Application</text>
<path d="M458.4 552.2 Q 520 585 650.3 637.5" fill="none" stroke="#4a4a4a" stroke-width="1" stroke-dasharray="6,4"/>
<path d="M653.2 552.2 Q 660 605 682.9 637.5" fill="none" stroke="#4a4a4a" stroke-width="1" stroke-dasharray="6,4"/>
<path d="M756.6 552.2 Q 735 600 722.5 637.5" fill="none" stroke="#4a4a4a" stroke-width="1" stroke-dasharray="6,4"/>
<path d="M960.7 552.2 Q 890 580 765.4 637.5" fill="none" stroke="#4a4a4a" stroke-width="1" stroke-dasharray="6,4"/>
<path d="M280 619 C398.7 638.4, 561.2 652.8, 636 655.5" fill="none" stroke="#4a4a4a" stroke-width="1" stroke-dasharray="6,4"/>
<path d="M1118.0 520.0 C1115.0 524.3, 1107.7 535.0, 1100.0 546.0 C1092.3 557.0, 1084.8 574.8, 1071.8 586.3 C1058.8 597.8, 1045.7 606.1, 1021.7 615.1 C997.7 624.1, 966.3 633.2, 927.8 640.0 C889.3 646.8, 828.5 652.5, 790.5 655.8" fill="none" stroke="#4a4a4a" stroke-width="1" stroke-dasharray="6,4"/>
<polygon points="650.3,637.5 644.0,630.4 646.1,635.8 640.8,638.2" fill="#3a3a3a" stroke="#3a3a3a" stroke-width="0.5" stroke-linejoin="round"/>
<polygon points="682.9,637.5 681.4,628.1 680.3,633.8 674.6,633.0" fill="#3a3a3a" stroke="#3a3a3a" stroke-width="0.5" stroke-linejoin="round"/>
<polygon points="722.5,637.5 729.2,630.8 723.9,633.2 721.2,628.1" fill="#3a3a3a" stroke="#3a3a3a" stroke-width="0.5" stroke-linejoin="round"/>
<polygon points="765.4,637.5 774.9,637.8 769.5,635.6 771.4,630.1" fill="#3a3a3a" stroke="#3a3a3a" stroke-width="0.5" stroke-linejoin="round"/>
<polygon points="636.0,655.5 627.7,651.0 631.5,655.3 627.4,659.4" fill="#3a3a3a" stroke="#3a3a3a" stroke-width="0.5" stroke-linejoin="round"/>
<polygon points="790.5,655.8 799.4,659.2 795.0,655.4 798.6,650.8" fill="#3a3a3a" stroke="#3a3a3a" stroke-width="0.5" stroke-linejoin="round"/>
<text x="599.3" y="613.6" font-size="9.9" font-weight="normal" font-style="normal" text-anchor="start" fill="#222" textLength="55.8" lengthAdjust="spacing">«manifest»</text>
<text x="668.6" y="613.6" font-size="9.9" font-weight="normal" font-style="normal" text-anchor="start" fill="#222" textLength="56.1" lengthAdjust="spacing">«manifest»</text>
<text x="734.6" y="613.6" font-size="9.9" font-weight="normal" font-style="normal" text-anchor="start" fill="#222" textLength="56.7" lengthAdjust="spacing">«manifest»</text>
<text x="836.9" y="613.6" font-size="9.9" font-weight="normal" font-style="normal" text-anchor="start" fill="#222" textLength="56.1" lengthAdjust="spacing">«manifest»</text>
</svg>
  </div>

  <!-- zoom controls -->
  <div class="a" style="left:1051.5px;top:356.3px;opacity:0.62">
    <div class="zb" style="top:0"><svg width="34" height="28" viewBox="0 0 34 28"><circle cx="16.2" cy="13" r="5.3" fill="none" stroke="#374151" stroke-width="1.1"/><path d="M20 16.8 L22.6 19.4 M13.6 13 H18.8 M16.2 10.4 V15.6" stroke="#374151" stroke-width="1.1"/></svg></div>
    <div class="zb" style="top:36px"><svg width="34" height="28" viewBox="0 0 34 28"><circle cx="16.2" cy="13" r="5.3" fill="none" stroke="#374151" stroke-width="1.1"/><path d="M20 16.8 L22.6 19.4 M13.6 13 H18.8" stroke="#374151" stroke-width="1.1"/></svg></div>
    <div class="zb" style="top:72px"><svg width="34" height="28" viewBox="0 0 34 28"><path d="M12.6 11.4 A5.4 5.4 0 1 0 14.5 9.3" fill="none" stroke="#374151" stroke-width="1.1"/><path d="M12.2 8 V11.6 H15.8" fill="none" stroke="#374151" stroke-width="1.1"/></svg></div>
    <div class="zb" style="top:108px"><svg width="34" height="28" viewBox="0 0 34 28"><path d="M11.5 8.5 L15 12 M11.5 8.5 H14.3 M11.5 8.5 V11.3 M22.5 8.5 L19 12 M22.5 8.5 H19.7 M22.5 8.5 V11.3 M11.5 19.5 L15 16 M11.5 19.5 H14.3 M11.5 19.5 V16.7 M22.5 19.5 L19 16 M22.5 19.5 H19.7 M22.5 19.5 V16.7" fill="none" stroke="#374151" stroke-width="1.1"/></svg></div>
    <div class="zb" style="top:144px"><svg width="34" height="28" viewBox="0 0 34 28"><path d="M11.5 11.5 V8.5 H14.5 M19.5 8.5 H22.5 V11.5 M22.5 16.5 V19.5 H19.5 M14.5 19.5 H11.5 V16.5" fill="none" stroke="#374151" stroke-width="1.1"/></svg></div>
  </div>
  <!-- INPUT -->
  <div class="a" style="left:230px;top:738px;width:952px;height:87px;background:#fff;border-top:1px solid #e5e7eb"></div>
  <div class="a" style="left:252px;top:753px;width:862px;height:58px;border-radius:12px;background:#fff;border:1px solid #e3e5e8;box-shadow:0 1px 2px rgba(0,0,0,0.04)"></div>
  <div class="txt" style="left:268px;top:768.5px;font-size:12.2px;color:#6b7280">Type your message... (Enter to send, Shift+Enter for new line)</div>
  <div class="a" style="left:1124px;top:775px;width:36px;height:36px;border-radius:50%;background:#a3bdfb"></div>
  <svg class="a" style="left:1134px;top:785px" width="16" height="16" viewBox="0 0 16 16"><path d="M14 2 L1.8 6.8 L7 9 L9.2 14.2 Z M14 2 L7 9" fill="none" stroke="#fff" stroke-width="1.2" stroke-linejoin="round"/></svg>
  <!-- cursor -->
  <svg class="a" style="left:908px;top:284px" width="16" height="22" viewBox="0 0 16 22"><path d="M1.5 1.5 V17 L5.2 13.6 L8 20 L10.6 18.8 L7.9 12.6 L12.8 12.4 Z" fill="#fff" stroke="#000" stroke-width="1.1" stroke-linejoin="round"/></svg>
</div>

</body></html>
